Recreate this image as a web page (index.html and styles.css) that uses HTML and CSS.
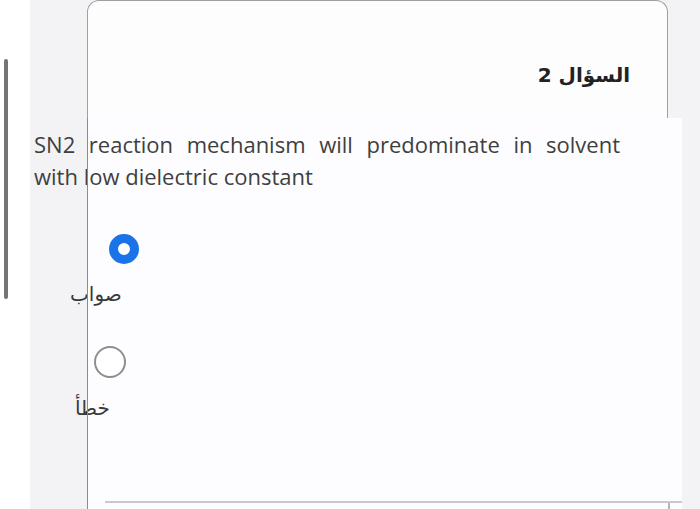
FILE: index.html
```html
<!DOCTYPE html>
<html lang="ar">
<head>
  <meta charset="UTF-8" />
  <meta name="viewport" content="width=device-width, initial-scale=1.0" />
  <title>السؤال 2</title>
  <link rel="stylesheet" href="styles.css">
</head>
<body>
  <div class="scrollbar"></div>
  <div class="page">
    <div class="card-head">
      <div class="q-title" dir="rtl">السؤال 2</div>
    </div>
    <div class="card-body">
      <p class="q-text" dir="ltr">SN2 reaction mechanism will predominate in solvent with low dielectric constant</p>
      <div class="option opt-true">
        <span class="radio checked"></span>
        <span class="opt-label" dir="rtl">صواب</span>
      </div>
      <div class="option opt-false">
        <span class="radio"></span>
        <span class="opt-label" dir="rtl">خطأ</span>
      </div>
      <div class="card-foot"><span class="tick"></span></div>
    </div>
  </div>
</body>
</html>
```

FILE: styles.css
```css
html, body {
  margin: 0;
  padding: 0;
  height: 509px;
  overflow: hidden;
}
body {
  background: #ffffff;
  font-family: 'Open Sans', 'Noto Sans', 'DejaVu Sans', sans-serif;
  color: #444;
  position: relative;
}
.scrollbar {
  position: absolute;
  left: 4px;
  top: 59px;
  width: 4px;
  height: 240px;
  background: #747474;
  border-radius: 2px;
}
.page {
  margin-left: 30px;
  height: 509px;
  padding-left: 57px;
  background: #f3f3f5;
  box-sizing: border-box;
}
.card-head {
  width: 581px;
  height: 118px;
  box-sizing: border-box;
  background: #fdfdfe;
  border: 1px solid #a0a0a0;
  border-bottom: none;
  border-radius: 12px 12px 0 0;
  display: flex;
  justify-content: flex-end;
  padding: 58px 37px 0 0;
}
.q-title {
  font-family: 'DejaVu Sans', 'Noto Sans', sans-serif;
  font-weight: bold;
  font-size: 20px;
  line-height: 32px;
  color: #222;
}
.card-body {
  width: 595px;
  height: 391px;
  box-sizing: border-box;
  padding-left: 1px;
  background: #fdfcfe;
  display: flex;
  flex-direction: column;
  align-items: flex-start;
  position: relative;
}
/* the card's left edge runs over the overflowing text */
.card-body::before {
  content: "";
  position: absolute;
  left: 0;
  top: 0;
  bottom: 0;
  width: 1px;
  background: #8c8c8c;
  z-index: 1;
}
.q-text {
  margin: 10px 0 0 -54px;
  width: 586px;
  font-size: 22px;
  line-height: 32px;
  text-align: justify;
  color: #3f3f3f;
}
.option {
  display: flex;
  flex-direction: column;
  align-items: flex-start;
}
.radio {
  display: block;
  box-sizing: border-box;
  border-radius: 50%;
  background: #fff;
}
.radio.checked {
  width: 30px;
  height: 30px;
  border: 9px solid #1a73e8;
}
.opt-true {
  margin-top: 42px;
}
.opt-true .radio {
  margin-left: 21px;
}
.opt-true .opt-label {
  margin-left: -18px;
}
.opt-false {
  margin-top: 40px;
}
.opt-false .radio {
  width: 32px;
  height: 32px;
  border: 2px solid #8e8e8e;
  margin-left: 6px;
}
.opt-false .opt-label {
  margin-left: -13px;
}
.opt-label {
  margin-top: 18px;
  font-family: 'DejaVu Sans', 'Noto Sans', sans-serif;
  font-size: 20px;
  line-height: 24px;
  color: #3a3a3a;
}
.card-foot {
  margin: auto 0 6px 17px;
  align-self: stretch;
  height: 2px;
  background: #c9c9c9;
  position: relative;
}
.tick {
  position: absolute;
  right: 12px;
  top: 2px;
  width: 2px;
  height: 6px;
  background: #b5b5b5;
}
```
